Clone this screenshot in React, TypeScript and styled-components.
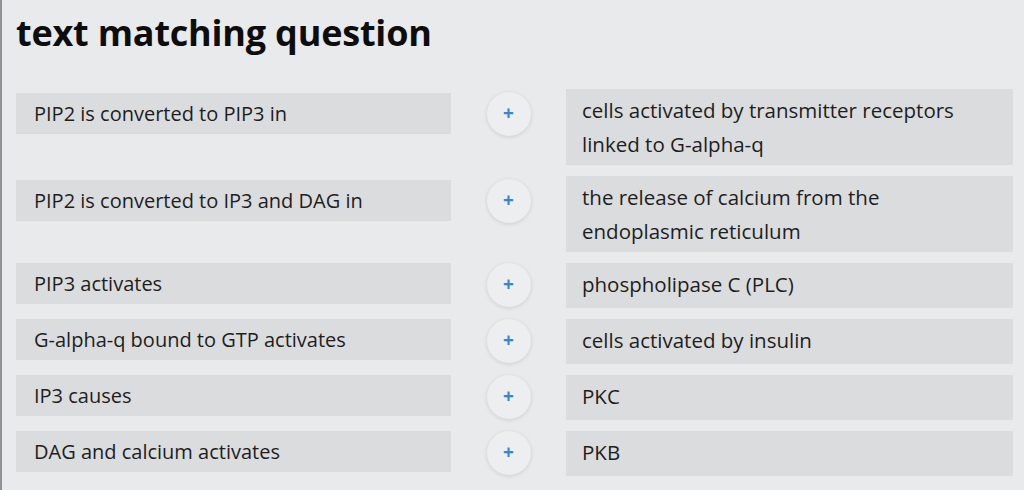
import styled, { createGlobalStyle } from "styled-components";

interface Pair {
  prompt: string;
  answer: string;
}

const pairs: Pair[] = [
  { prompt: "PIP2 is converted to PIP3 in", answer: "cells activated by transmitter receptors linked to G-alpha-q" },
  { prompt: "PIP2 is converted to IP3 and DAG in", answer: "the release of calcium from the endoplasmic reticulum" },
  { prompt: "PIP3 activates", answer: "phospholipase C (PLC)" },
  { prompt: "G-alpha-q bound to GTP activates", answer: "cells activated by insulin" },
  { prompt: "IP3 causes", answer: "PKC" },
  { prompt: "DAG and calcium activates", answer: "PKB" },
];

const GlobalStyle = createGlobalStyle`
  * {
    box-sizing: border-box;
  }
  body {
    margin: 0;
    background: #e8eaeb;
    font-family: "Open Sans", "Noto Sans", sans-serif;
  }
`;

const Page = styled.div`
  width: 1024px;
  height: 490px;
  overflow: hidden;
  background: #e8eaeb;
  border-left: 2px solid #8d9296;
  padding: 9px 11px 0 14px;
`;

const Title = styled.h1`
  margin: 0 0 32px 0;
  font-size: 36px;
  font-weight: 700;
  line-height: 48px;
  color: #0d0d0d;
  letter-spacing: -0.2px;
`;

const List = styled.div`
  display: flex;
  flex-direction: column;
  gap: 11px;
`;

const Row = styled.div`
  display: grid;
  grid-template-columns: 435px 115px 1fr;
  align-items: start;
`;

// rows with a two-line answer sit their prompt a little lower
const Prompt = styled.div<{ $tall?: boolean }>`
  height: 41px;
  margin-top: ${(p) => (p.$tall ? "4px" : "0")};
  background: #dadcdd;
  padding: 0 18px;
  display: flex;
  align-items: center;
  font-size: 20px;
  color: #1e1e1e;
`;

const AddButton = styled.button<{ $tall?: boolean }>`
  justify-self: center;
  width: 44px;
  height: 44px;
  margin-top: ${(p) => (p.$tall ? "3px" : "0")};
  border: none;
  border-radius: 50%;
  background: #eceeef;
  box-shadow: 0 1px 4px rgba(0, 0, 0, 0.12);
  color: #3a86cc;
  font-family: "Open Sans", sans-serif;
  font-size: 19px;
  font-weight: 700;
  line-height: 1;
  padding: 0 0 2px 0;
  display: flex;
  align-items: center;
  justify-content: center;
`;

const Answer = styled.div`
  min-height: 45px;
  background: #dadcdd;
  padding: 4px 16px;
  font-size: 20.5px;
  line-height: 34px;
  color: #1e1e1e;
`;

const AnswerText = styled.span`
  display: block;
  max-width: 400px;
`;

export default function App() {
  return (
    <>
      <GlobalStyle />
      <Page>
        <Title>text matching question</Title>
        <List>
          {pairs.map((p) => {
            const tall = p.answer.length > 40;
            return (
              <Row key={p.prompt}>
                <Prompt $tall={tall}>{p.prompt}</Prompt>
                <AddButton type="button" $tall={tall}>+</AddButton>
                <Answer>
                  <AnswerText>{p.answer}</AnswerText>
                </Answer>
              </Row>
            );
          })}
        </List>
      </Page>
    </>
  );
}
